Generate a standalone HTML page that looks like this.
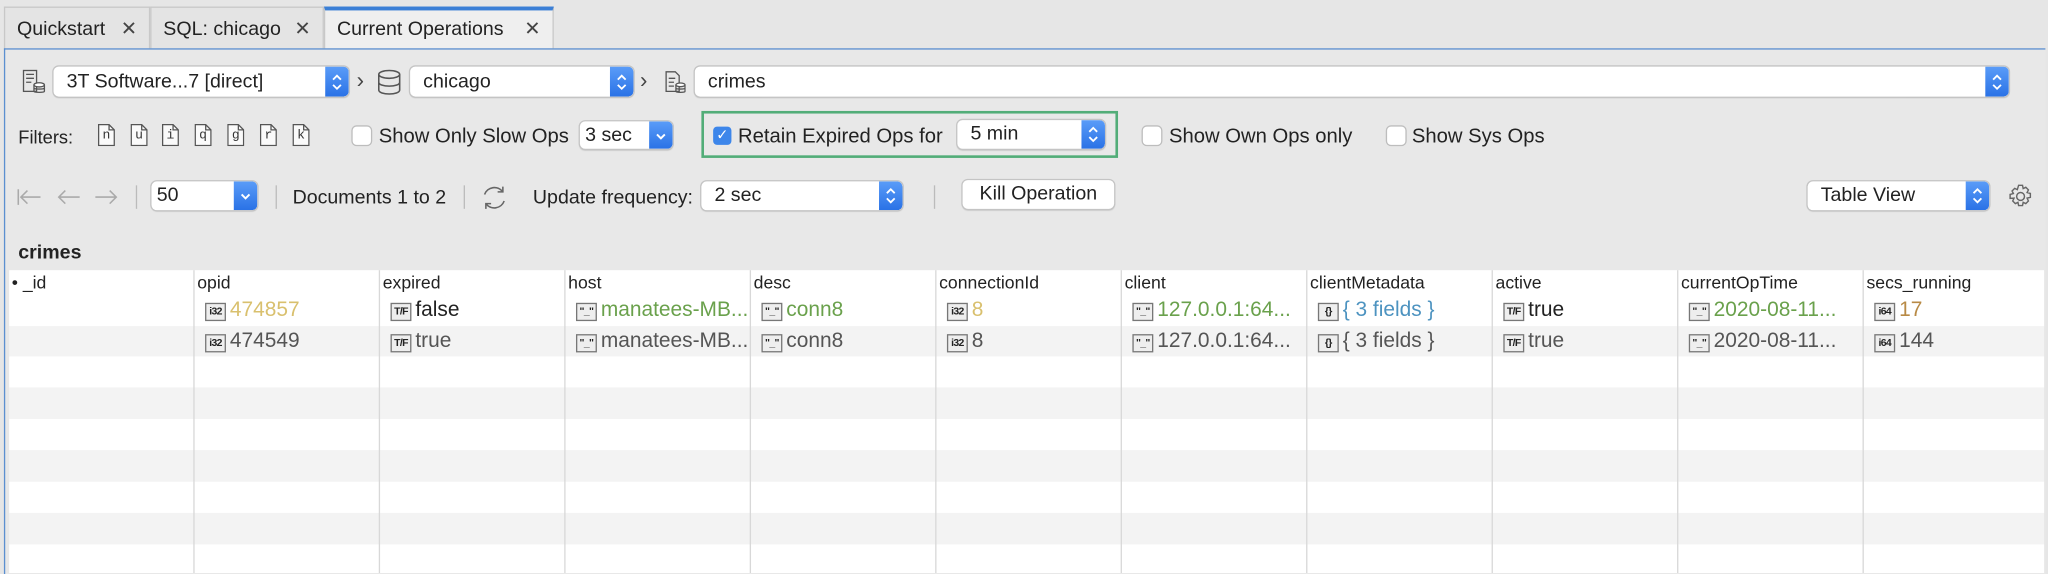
<!DOCTYPE html>
<html><head><meta charset="utf-8">
<style>
html,body{margin:0;padding:0;width:2048px;height:573px;overflow:hidden;background:#e6e6e6;}
#s{position:absolute;left:0;top:0;width:1568px;height:439px;transform:scale(1.30612,1.30524);transform-origin:0 0;font-family:"Liberation Sans",sans-serif;color:#222;font-size:14px;}
.a{position:absolute;white-space:nowrap;}
.tab{position:absolute;top:5px;height:33px;background:#e4e4e4;border:1px solid #c8c8c8;border-bottom:none;box-sizing:border-box;font-size:15px;line-height:33px;padding-left:9px;}
.tab .x{position:absolute;right:9px;top:0;font-size:15px;color:#444;}
.combo{position:absolute;background:#fff;border-radius:4px;box-shadow:0 0 0 1px #c4c4c4,0 1px 1px #bbb;font-size:15px;box-sizing:border-box;padding-left:10px;overflow:hidden;}
.combo .ar{position:absolute;right:0;top:0;bottom:0;width:18px;background:linear-gradient(#5a9cf8,#2a72e6);border-radius:0 4px 4px 0;}
.combo .ar svg{position:absolute;left:4px;top:50%;margin-top:-7px;}
.cb{position:absolute;width:14px;height:14px;background:#fff;border-radius:3px;box-shadow:0 0 0 1px #bdbdbd;}
.sep{position:absolute;width:1px;height:18px;background:#bbb;}
.fi{position:absolute;top:95px;width:13px;height:17px;font-family:"Liberation Mono",monospace;font-size:10px;color:#333;}
.fi svg{position:absolute;left:0;top:0}
.fi span{position:absolute;left:0;right:0;top:4px;line-height:12px;text-align:center}
.row{position:absolute;left:7px;width:1558px;}
.col{position:absolute;top:207px;bottom:0;width:1px;background:#d8d8d8;}
.h{position:absolute;top:209px;font-size:13.5px;color:#222;}
.ic{display:inline-block;width:14px;height:12px;border:1px solid #777;background:#eee;font-size:8px;line-height:12px;text-align:center;vertical-align:1px;margin-right:3px;font-family:"Liberation Sans",sans-serif;color:#222;letter-spacing:-.5px;font-weight:bold;}
.c{position:absolute;font-size:16px;}
.y{color:#d9c06e}.g{color:#6aa14c}.b{color:#4d93c0}.o{color:#b88a45}.gr{color:#555}
</style></head><body><div id="s">
<svg width="0" height="0" style="position:absolute"><defs>
<symbol id="ud" viewBox="0 0 10 14"><path d="M2 5l3-3 3 3M2 9l3 3 3-3" fill="none" stroke="#fff" stroke-width="1.4"/></symbol>
<symbol id="dn" viewBox="0 0 10 14"><path d="M2 6l3 3 3-3" fill="none" stroke="#fff" stroke-width="1.5"/></symbol>
<symbol id="doc" viewBox="0 0 13 17"><path d="M.5 .5h8l4 4v12H.5z" fill="#fafafa" stroke="#555"/><path d="M8.5 .5v4h4" fill="none" stroke="#555"/></symbol>
</defs></svg>
<!-- tabs -->
<div class="tab" style="left:3px;width:112px;">Quickstart<span class="x">✕</span></div>
<div class="tab" style="left:115px;width:133px;">SQL: chicago<span class="x">✕</span></div>
<div class="tab" style="left:248px;width:176px;background:#efefef;border-top:3px solid #3b7fd6;line-height:30px;">Current Operations<span class="x">✕</span></div>
<!-- panel -->
<div class="a" style="left:3px;top:37px;width:1562px;height:402px;border-top:1px solid #5b8fd0;border-left:1px solid #5b8fd0;background:#e8e8e8;"></div>
<!-- row1 -->
<svg class="a" style="left:17px;top:53px" width="18" height="20" viewBox="0 0 18 20" fill="none" stroke="#555" stroke-width="1"><rect x="1" y="1" width="10" height="16"/><path d="M3 4h6M3 7h6M3 10h4"/><ellipse cx="13" cy="12" rx="4" ry="1.6" fill="#fff"/><path d="M9 12v5c0 1 8 1 8 0v-5M9 14.5c0 1 8 1 8 0"/></svg>
<div class="combo" style="left:41px;top:51px;width:226px;height:23px;line-height:23px;">3T Software...7 [direct]<div class="ar"><svg width="10" height="14"><use href="#ud"/></svg></div></div>
<div class="a" style="left:273px;top:52px;font-size:17px;color:#444">›</div>
<svg class="a" style="left:289px;top:53px" width="18" height="20" viewBox="0 0 18 20" fill="none" stroke="#555" stroke-width="1.2"><ellipse cx="9" cy="4" rx="8" ry="3"/><path d="M1 4v12c0 4 16 4 16 0V4M1 10c0 4 16 4 16 0"/></svg>
<div class="combo" style="left:314px;top:51px;width:171px;height:23px;line-height:23px;">chicago<div class="ar"><svg width="10" height="14"><use href="#ud"/></svg></div></div>
<div class="a" style="left:490px;top:52px;font-size:17px;color:#444">›</div>
<svg class="a" style="left:509px;top:54px" width="16" height="18" viewBox="0 0 16 18" fill="none" stroke="#555" stroke-width="1"><path d="M1 1h7l3 3v12H1z"/><path d="M3 6h5M3 9h4M3 12h4"/><ellipse cx="12" cy="11" rx="3.5" ry="1.4" fill="#fff"/><path d="M8.5 11v5c0 1 7 1 7 0v-5M8.5 13.5c0 1 7 1 7 0"/></svg>
<div class="combo" style="left:532px;top:51px;width:1006px;height:23px;line-height:23px;">crimes<div class="ar"><svg width="10" height="14"><use href="#ud"/></svg></div></div>
<!-- row2 -->
<div class="a" style="left:14px;top:97px;font-size:14px">Filters:</div>
<div class="fi" style="left:75px"><svg width="13" height="17"><use href="#doc"/></svg><span>n</span></div>
<div class="fi" style="left:100px"><svg width="13" height="17"><use href="#doc"/></svg><span>u</span></div>
<div class="fi" style="left:124px"><svg width="13" height="17"><use href="#doc"/></svg><span>i</span></div>
<div class="fi" style="left:149px"><svg width="13" height="17"><use href="#doc"/></svg><span>q</span></div>
<div class="fi" style="left:174px"><svg width="13" height="17"><use href="#doc"/></svg><span>g</span></div>
<div class="fi" style="left:199px"><svg width="13" height="17"><use href="#doc"/></svg><span>r</span></div>
<div class="fi" style="left:224px"><svg width="13" height="17"><use href="#doc"/></svg><span>k</span></div>
<div class="cb" style="left:270px;top:97px"></div>
<div class="a" style="left:290px;top:96px;font-size:15.5px">Show Only Slow Ops</div>
<div class="combo" style="left:444px;top:93px;width:71px;height:21px;line-height:21px;padding-left:4px">3 sec<div class="ar"><svg width="10" height="14"><use href="#dn"/></svg></div></div>
<div class="a" style="left:537px;top:85px;width:319px;height:36px;border:2px solid #52ad78;box-sizing:border-box;"></div>
<div class="cb" style="left:546px;top:97px;background:#3d86ea;box-shadow:none;color:#fff;font-size:11px;text-align:center;line-height:14px">✓</div>
<div class="a" style="left:565px;top:96px;font-size:15.5px">Retain Expired Ops for</div>
<div class="combo" style="left:733px;top:92px;width:113px;height:22px;line-height:22px;">5 min<div class="ar"><svg width="10" height="14"><use href="#ud"/></svg></div></div>
<div class="cb" style="left:875px;top:97px"></div>
<div class="a" style="left:895px;top:96px;font-size:15.5px">Show Own Ops only</div>
<div class="cb" style="left:1062px;top:97px"></div>
<div class="a" style="left:1081px;top:96px;font-size:15.5px">Show Sys Ops</div>
<!-- row3 -->
<svg class="a" style="left:13px;top:144px" width="80" height="14" viewBox="0 0 80 14" fill="none" stroke="#aaa" stroke-width="1.2"><path d="M1 1v12M3 7h15M8 2L3 7l5 5M32 7h16M37 2l-5 5 5 5M60 7h16M71 2l5 5-5 5"/></svg>
<div class="sep" style="left:104px;top:142px"></div>
<div class="combo" style="left:116px;top:139px;width:81px;height:22px;line-height:22px;padding-left:4px">50<div class="ar"><svg width="10" height="14"><use href="#dn"/></svg></div></div>
<div class="sep" style="left:211px;top:142px"></div>
<div class="a" style="left:224px;top:143px;font-size:15px">Documents 1 to 2</div>
<div class="sep" style="left:355px;top:142px"></div>
<svg class="a" style="left:368px;top:141px" width="21" height="21" viewBox="0 0 21 21" fill="none" stroke="#666" stroke-width="1.2"><path d="M3 8a8 8 0 0 1 14-2M18 13a8 8 0 0 1-14 2"/><path d="M17 2v4h-4M4 19v-4h4"/></svg>
<div class="a" style="left:408px;top:143px;font-size:15px">Update frequency:</div>
<div class="combo" style="left:537px;top:139px;width:154px;height:22px;line-height:22px;">2 sec<div class="ar"><svg width="10" height="14"><use href="#ud"/></svg></div></div>
<div class="sep" style="left:715px;top:142px"></div>
<div class="combo" style="left:737px;top:138px;width:116px;height:22px;line-height:22px;padding-left:0;text-align:center">Kill Operation</div>
<div class="combo" style="left:1384px;top:139px;width:139px;height:22px;line-height:22px;">Table View<div class="ar"><svg width="10" height="14"><use href="#ud"/></svg></div></div>
<svg class="a" style="left:1538px;top:141px" width="18" height="19" viewBox="0 0 18 19" fill="none" stroke="#666" stroke-width="1.1"><path d="M7.5 1h3l.5 2.5 2-1 2 2-1 2 2.5.7v3l-2.5.6 1 2.2-2 2-2-1-.5 2.5h-3l-.5-2.5-2 1-2-2 1-2.2L1 11V8l2.5-.7-1-2 2-2 2 1z"/><circle cx="9" cy="9.5" r="3"/></svg>
<!-- title -->
<div class="a" style="left:14px;top:185px;font-size:15px;font-weight:bold">crimes</div>
<!-- table -->
<div class="row" style="top:207px;height:19px;background:#fff;border-bottom:1px solid #e4e4e4"></div>
<div class="row" style="top:226px;height:24px;background:#fff"></div>
<div class="row" style="top:250px;height:23px;background:#f3f3f3"></div>
<div class="row" style="top:273px;height:24px;background:#fff"></div>
<div class="row" style="top:297px;height:24px;background:#f3f3f3"></div>
<div class="row" style="top:321px;height:24px;background:#fff"></div>
<div class="row" style="top:345px;height:24px;background:#f3f3f3"></div>
<div class="row" style="top:369px;height:24px;background:#fff"></div>
<div class="row" style="top:393px;height:24px;background:#f3f3f3"></div>
<div class="row" style="top:417px;height:22px;background:#fff"></div>
<div class="col" style="left:148px"></div><div class="col" style="left:290px"></div><div class="col" style="left:432px"></div><div class="col" style="left:574px"></div><div class="col" style="left:716px"></div><div class="col" style="left:858px"></div><div class="col" style="left:1000px"></div><div class="col" style="left:1142px"></div><div class="col" style="left:1284px"></div><div class="col" style="left:1426px"></div>
<div class="h" style="left:9px">• _id</div><div class="h" style="left:151px">opid</div><div class="h" style="left:293px">expired</div><div class="h" style="left:435px">host</div><div class="h" style="left:577px">desc</div><div class="h" style="left:719px">connectionId</div><div class="h" style="left:861px">client</div><div class="h" style="left:1003px">clientMetadata</div><div class="h" style="left:1145px">active</div><div class="h" style="left:1287px">currentOpTime</div><div class="h" style="left:1429px">secs_running</div>
<!-- row 1 -->
<div class="c y" style="left:157px;top:229px"><span class="ic">i32</span>474857</div>
<div class="c" style="left:299px;top:229px"><span class="ic">T/F</span>false</div>
<div class="c g" style="left:441px;top:229px"><span class="ic">"_"</span>manatees-MB...</div>
<div class="c g" style="left:583px;top:229px"><span class="ic">"_"</span>conn8</div>
<div class="c y" style="left:725px;top:229px"><span class="ic">i32</span>8</div>
<div class="c g" style="left:867px;top:229px"><span class="ic">"_"</span>127.0.0.1:64...</div>
<div class="c b" style="left:1009px;top:229px"><span class="ic">{}</span>{ 3 fields }</div>
<div class="c" style="left:1151px;top:229px"><span class="ic">T/F</span>true</div>
<div class="c g" style="left:1293px;top:229px"><span class="ic">"_"</span>2020-08-11...</div>
<div class="c o" style="left:1435px;top:229px"><span class="ic">i64</span>17</div>
<!-- row 2 -->
<div class="c gr" style="left:157px;top:253px"><span class="ic">i32</span>474549</div>
<div class="c gr" style="left:299px;top:253px"><span class="ic">T/F</span>true</div>
<div class="c gr" style="left:441px;top:253px"><span class="ic">"_"</span>manatees-MB...</div>
<div class="c gr" style="left:583px;top:253px"><span class="ic">"_"</span>conn8</div>
<div class="c gr" style="left:725px;top:253px"><span class="ic">i32</span>8</div>
<div class="c gr" style="left:867px;top:253px"><span class="ic">"_"</span>127.0.0.1:64...</div>
<div class="c gr" style="left:1009px;top:253px"><span class="ic">{}</span>{ 3 fields }</div>
<div class="c gr" style="left:1151px;top:253px"><span class="ic">T/F</span>true</div>
<div class="c gr" style="left:1293px;top:253px"><span class="ic">"_"</span>2020-08-11...</div>
<div class="c gr" style="left:1435px;top:253px"><span class="ic">i64</span>144</div>
</div></body></html>
